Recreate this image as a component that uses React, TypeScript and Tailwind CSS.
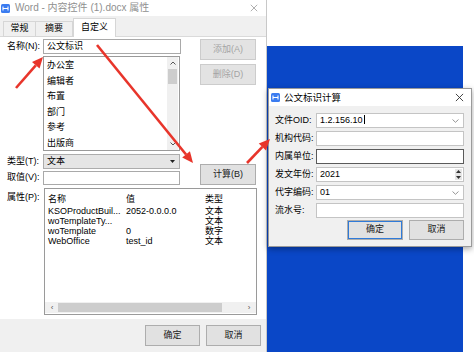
import React from "react";

const btn =
  "flex items-center justify-center border border-[#adadad] bg-[#e1e1e1] text-[#1a1a1a]";
const btnOff =
  "flex items-center justify-center border border-[#cccccc] bg-[#e3e3e3] text-[#a3a3a3]";

function WpsIcon() {
  return (
    <svg width="9" height="9" viewBox="0 0 9 9" className="shrink-0">
      <rect x="0" y="0" width="9" height="9" rx="1.5" fill="#3b7cf0" />
      <path
        d="M2 2.6 L2 6.4 M7 2.6 L7 6.4 M2 4.5 L7 4.5"
        stroke="#fff"
        strokeWidth="1.1"
        fill="none"
      />
    </svg>
  );
}

function CloseX({ size, color }: { size: number; color: string }) {
  return (
    <svg width={size} height={size} viewBox="0 0 10 10">
      <path d="M1 1 L9 9 M9 1 L1 9" stroke={color} strokeWidth="1" />
    </svg>
  );
}

function Chevron() {
  return (
    <svg width="7" height="4" viewBox="0 0 7 4">
      <path d="M0.5 0.5 L3.5 3.3 L6.5 0.5" stroke="#8a8a8a" strokeWidth="0.9" fill="none" />
    </svg>
  );
}

function PropsDialog() {
  const names = ["办公室", "编辑者", "布置", "部门", "参考", "出版商"];
  const rows = [
    ["KSOProductBuil...", "2052-0.0.0.0", "文本"],
    ["woTemplateTy...", "", "文本"],
    ["woTemplate", "0", "数字"],
    ["WebOffice", "test_id", "文本"],
  ];

  return (
    <div className="flex w-[267px] shrink-0 flex-col border-r border-[#c8c8c8] bg-white">
      {/* title bar */}
      <div className="flex h-[16px] items-center pl-[1px] pr-[8px]">
        <WpsIcon />
        <span className="ml-[5px] text-[10px] leading-none text-[#8f8f8f]">
          Word - 内容控件 (1).docx 属性
        </span>
        <span className="ml-auto">
          <CloseX size={8} color="#9a9a9a" />
        </span>
      </div>

      {/* tabs */}
      <div className="flex h-[21px] items-end border-b border-[#dadada] bg-[#f0f0f0] pl-[3px]">
        <div className="mb-[-1px] flex h-[16px] w-[33px] items-center justify-center border border-[#d6d6d6] bg-[#f0f0f0]">
          常规
        </div>
        <div className="mb-[-1px] flex h-[16px] w-[37px] items-center justify-center border border-l-0 border-[#d6d6d6] bg-[#f0f0f0]">
          摘要
        </div>
        <div className="mb-[-1px] flex h-[19px] w-[43px] items-center justify-center border border-b-0 border-[#d6d6d6] bg-white">
          自定义
        </div>
      </div>

      {/* body */}
      <div className="flex-1 bg-white pl-[7px] pt-[2px]">
        <div className="flex">
          <div className="flex w-[174px] flex-col">
            <div className="flex h-[15px] items-center">
              <span className="w-[36px]">名称(N):</span>
              <div className="flex h-full w-[138px] items-center border border-[#a9a9a9] pl-[3px]">
                公文标识
              </div>
            </div>
            <div className="ml-[36px] mt-[2px] flex h-[95px] w-[137px] border border-[#9a9a9a]">
              <div className="flex-1 pl-[3px] pt-[1px]">
                {names.map((n) => (
                  <div key={n} className="h-[15.6px] leading-[15.6px]">
                    {n}
                  </div>
                ))}
              </div>
              <div className="mr-[1px] flex w-[11px] flex-col bg-[#f0f0f0]">
                <div className="flex h-[12px] items-center justify-center">
                  <svg width="6" height="4" viewBox="0 0 6 4">
                    <path d="M0.5 3.5 L3 1 L5.5 3.5" stroke="#555" strokeWidth="1" fill="none" />
                  </svg>
                </div>
                <div className="mx-[1px] h-[15px] bg-[#cdcdcd]" />
                <div className="mt-auto flex h-[12px] items-center justify-center">
                  <svg width="6" height="4" viewBox="0 0 6 4">
                    <path d="M0.5 0.5 L3 3 L5.5 0.5" stroke="#555" strokeWidth="1" fill="none" />
                  </svg>
                </div>
              </div>
            </div>
            <div className="mt-[3px] flex h-[15px] items-center">
              <span className="w-[36px]">类型(T):</span>
              <div className="flex h-full w-[137px] items-center justify-between border border-[#acacac] bg-[#e5e5e5] pl-[3px] pr-[4px]">
                <span>文本</span>
                <svg width="5" height="3" viewBox="0 0 5 3">
                  <path d="M0 0 L5 0 L2.5 3 Z" fill="#222" />
                </svg>
              </div>
            </div>
            <div className="mt-[2px] flex h-[14px] items-center">
              <span className="w-[36px]">取值(V):</span>
              <div className="h-full w-[137px] border border-[#a9a9a9]" />
            </div>
          </div>

          <div className="ml-[19px] flex w-[56px] flex-col justify-between">
            <div className="flex flex-col gap-[4px]">
              <div className={`${btnOff} h-[21px]`}>添加(A)</div>
              <div className={`${btnOff} h-[21px]`}>删除(D)</div>
            </div>
            <div className={`${btn} h-[21px]`}>计算(B)</div>
          </div>
        </div>

        <div className="mt-[3px] flex">
          <span className="w-[37px] pt-[3px]">属性(P):</span>
          <div className="flex h-[127px] w-[213px] flex-col border border-[#9a9a9a]">
            <div className="px-[3px] pt-[5px]">
              <div className="grid h-[10px] grid-cols-[78px_79px_1fr] items-center leading-none">
                <span>名称</span>
                <span>值</span>
                <span>类型</span>
              </div>
              <div className="mt-[2px]">
                {rows.map((r) => (
                  <div
                    key={r[0]}
                    className="grid h-[10.2px] grid-cols-[78px_79px_1fr] items-center leading-none"
                  >
                    <span>{r[0]}</span>
                    <span>{r[1]}</span>
                    <span>{r[2]}</span>
                  </div>
                ))}
              </div>
            </div>
            <div className="mb-[1px] mt-auto flex h-[11px] items-center bg-[#f0f0f0] px-[1px]">
              <span className="flex w-[12px] justify-center text-[8px] leading-none text-[#555]">‹</span>
              <div className="h-[9px] w-[164px] bg-[#cdcdcd]" />
              <span className="ml-auto flex w-[12px] justify-center text-[8px] leading-none text-[#555]">›</span>
            </div>
          </div>
        </div>
      </div>

      {/* footer */}
      <div className="flex h-[33px] items-center justify-end gap-[6px] bg-[#f0f0f0] pr-[5px]">
        <div className={`${btn} h-[21px] w-[55px]`}>确定</div>
        <div className={`${btn} h-[21px] w-[55px]`}>取消</div>
      </div>
    </div>
  );
}

function Field({ label, children }: { label: string; children?: React.ReactNode }) {
  return (
    <div className="flex h-[15px] items-center">
      <span className="w-[41px] shrink-0">{label}</span>
      {children}
    </div>
  );
}

function CalcDialog() {
  const box = "flex h-full w-[148px] items-center border bg-white pl-[3px]";
  return (
    <div className="absolute left-[1px] top-[88px] flex w-[204px] flex-col border border-[#9a9a9a] bg-[#f0f0f0] shadow-[0_2px_6px_rgba(0,0,0,0.35)]">
      <div className="flex h-[17px] items-center bg-white pl-[2px] pr-[7px]">
        <WpsIcon />
        <span className="ml-[4px] text-[9.5px] leading-none">公文标识计算</span>
        <span className="ml-auto">
          <CloseX size={9} color="#333" />
        </span>
      </div>
      <div className="flex flex-col gap-[3px] pl-[6px] pr-[7px] pt-[7px]">
        <Field label="文件OID:">
          <div className={`${box} justify-between border-[#c4c4c4] pr-[4px]`}>
            <span>
              1.2.156.10<span className="ml-[1px] inline-block h-[9px] w-[1px] translate-y-[1px] bg-black" />
            </span>
            <Chevron />
          </div>
        </Field>
        <Field label="机构代码:">
          <div className={`${box} border-[#c4c4c4]`} />
        </Field>
        <Field label="内属单位:">
          <div className={`${box} border-[#5a5a5a]`} />
        </Field>
        <Field label="发文年份:">
          <div className={`${box} justify-between border-[#c4c4c4] pr-[1px]`}>
            <span>2021</span>
            <div className="flex h-[11px] w-[7px] flex-col items-center justify-between bg-[#e6e6e6] py-[1px]">
              <svg width="5" height="3" viewBox="0 0 5 3">
                <path d="M0 3 L5 3 L2.5 0 Z" fill="#333" />
              </svg>
              <svg width="5" height="3" viewBox="0 0 5 3">
                <path d="M0 0 L5 0 L2.5 3 Z" fill="#333" />
              </svg>
            </div>
          </div>
        </Field>
        <Field label="代字编码:">
          <div className={`${box} justify-between border-[#c4c4c4] pr-[4px]`}>
            <span>01</span>
            <Chevron />
          </div>
        </Field>
        <Field label="流水号:">
          <div className={`${box} border-[#c4c4c4]`} />
        </Field>
      </div>
      <div className="flex justify-end gap-[6px] pb-[6px] pr-[7px] pt-[2px]">
        <div className={`${btn} h-[20px] w-[56px] border-[#2f7ad8] shadow-[inset_0_0_0_1px_#2f7ad8]`}>确定</div>
        <div className={`${btn} h-[20px] w-[55px]`}>取消</div>
      </div>
    </div>
  );
}

function Desktop() {
  return (
    <div className="relative flex flex-1 flex-col">
      <div className="h-[46px] bg-white" />
      <div className="flex flex-1">
        <div className="flex-1 bg-[#0a47c7]" />
        <div className="w-[11px] bg-white" />
      </div>
      <CalcDialog />
    </div>
  );
}

function Arrow({ x1, y1, x2, y2 }: { x1: number; y1: number; x2: number; y2: number }) {
  const a = Math.atan2(y2 - y1, x2 - x1);
  const len = 11;
  const w = 5;
  const bx = x2 - len * Math.cos(a);
  const by = y2 - len * Math.sin(a);
  const px = -Math.sin(a) * w;
  const py = Math.cos(a) * w;
  return (
    <g>
      <line x1={x1} y1={y1} x2={bx} y2={by} stroke="#e8352b" strokeWidth="2.6" />
      <polygon
        points={`${x2},${y2} ${bx + px},${by + py} ${bx - px},${by - py}`}
        fill="#e8352b"
      />
    </g>
  );
}

function Arrows() {
  return (
    <svg className="pointer-events-none absolute left-0 top-0" width="474" height="352">
      <Arrow x1={16} y1={88} x2={43} y2={57} />
      <Arrow x1={97} y1={45} x2={193} y2={163} />
      <Arrow x1={247} y1={163} x2={270} y2={139} />
    </svg>
  );
}

export default function App() {
  return (
    <div className="relative flex h-[352px] w-[474px] overflow-hidden bg-white font-['Liberation_Sans','Noto_Sans_CJK_SC',sans-serif] text-[9px] text-black">
      <PropsDialog />
      <Desktop />
      <Arrows />
    </div>
  );
}
